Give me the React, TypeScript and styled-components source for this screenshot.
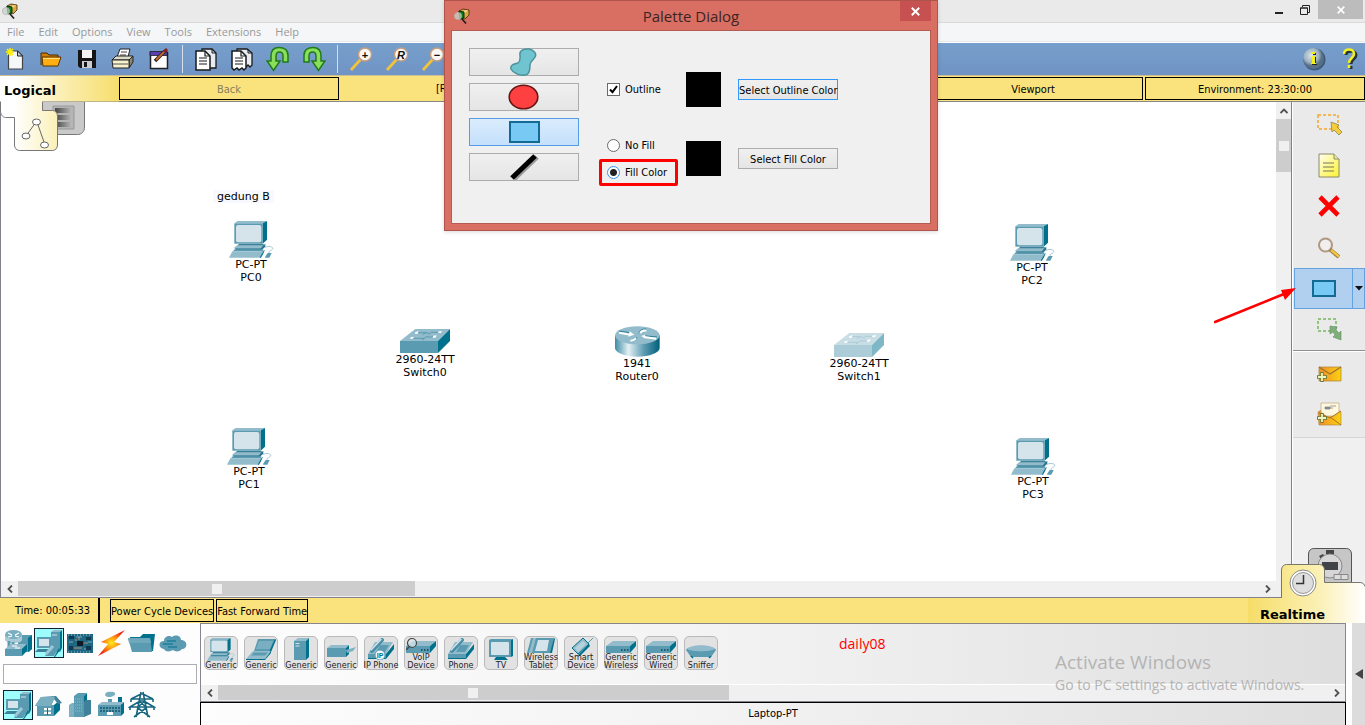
import React from "react";
import styled, { createGlobalStyle, css } from "styled-components";

const ui = `"DejaVu Sans Condensed", "DejaVu Sans", sans-serif`;
const segoe = `"Open Sans", "Noto Sans", sans-serif`;
const verdana = `"DejaVu Sans", sans-serif`;

const GlobalStyle = createGlobalStyle`
  *, *::before, *::after { box-sizing: border-box; }
  body { margin: 0; font: 11px/13px ${ui}; color: #000; background: #f0f0f0; }
  button { font: inherit; color: inherit; padding: 0; margin: 0; border: 0; background: none; }
  svg { display: block; flex: none; }
`;

/* ---------- frame ---------- */

const Page = styled.div`
  position: relative;
  display: flex;
  flex-direction: column;
  min-height: 100vh;
  overflow: hidden;
`;

const TitleBar = styled.header`
  display: flex;
  justify-content: space-between;
  height: 23px;
  background: #eaeaea;
  border-bottom: 1px solid #d9dadc;
`;

const AppIconBox = styled.div`
  padding: 3px 2px;
`;

const WindowButtons = styled.div`
  display: flex;
  padding-right: 2px;
`;

const WindowButton = styled.button<{ $close?: boolean }>`
  display: flex;
  align-items: center;
  justify-content: center;
  width: ${(p) => (p.$close ? 45 : 26)}px;
  height: 19px;
  background: ${(p) => (p.$close ? "#bcbcbc" : "transparent")};
`;

const MenuBar = styled.nav`
  display: flex;
  align-items: center;
  gap: 14px;
  height: 19px;
  padding-left: 7px;
  background: #f5f6f7;
  border-bottom: 1px solid #e8e9ea;
  font: 11px/16px ${segoe};
  color: #98999b;
`;

const ToolBar = styled.div`
  display: flex;
  align-items: center;
  justify-content: space-between;
  height: 34px;
  background: linear-gradient(#769fcb, #7094c5);
  border-top: 1px solid #fff;
  border-bottom: 1px solid #cdbf95;
`;

const ToolGroup = styled.div`
  display: flex;
  align-items: center;
  gap: 6px;
`;

const ToolButton = styled.button`
  display: flex;
  align-items: center;
  justify-content: center;
  width: 30px;
  height: 30px;
`;

const ToolSeparator = styled.span`
  width: 1px;
  height: 28px;
  margin: 0 2px;
  background: #d5dfec;
`;

const NavBar = styled.div`
  position: relative;
  display: flex;
  gap: 2px;
  height: 26px;
  padding: 1px 0 1px 119px;
  background: #fae37d;
  border-bottom: 1px solid #86868a;
`;

const NavButton = styled.button`
  width: 220px;
  height: 23px;
  padding-top: 1px;
  border: 1px solid #000;
  &:disabled { color: #85805f; }
`;

const NavLabel = styled.div`
  width: 220px;
  line-height: 24px;
  text-align: center;
`;

const Spacer = styled.div`
  flex: 1;
`;

const LogicalTab = styled.div`
  position: absolute;
  left: 0;
  top: 0;
  z-index: 2;
`;

const TabName = styled.span<{ $left: number; $top: number }>`
  position: absolute;
  left: ${(p) => p.$left}px;
  top: ${(p) => p.$top}px;
  font: bold 13px/16px ${verdana};
`;

/* ---------- work area ---------- */

const Main = styled.main`
  display: flex;
  flex: 1;
`;

const Workspace = styled.section`
  display: flex;
  flex-direction: column;
  flex: 1;
  min-width: 0;
  background: #f0f0f0;
  border: solid #80818c;
  border-width: 0 1px 1px;
`;

const CanvasRow = styled.div`
  display: flex;
  flex: 1;
`;

const ScrollFoot = styled.div`
  padding-right: 15px;
`;

const Canvas = styled.div`
  position: relative;
  flex: 1;
  background: #fff;
`;

const Node = styled.figure<{ $x: number; $y: number }>`
  position: absolute;
  left: ${(p) => p.$x}px;
  top: ${(p) => p.$y}px;
  display: flex;
  flex-direction: column;
  align-items: center;
  width: 80px;
  margin: 0;
  font: 11px/13px ${verdana};
  text-align: center;
`;

const CanvasNote = styled.div`
  position: absolute;
  left: 212px;
  top: 88px;
  padding: 0 4px;
  background: #f8f8ff;
  font: 11px/13px ${verdana};
`;

const ScrollTrack = styled.div<{ $vertical?: boolean }>`
  display: flex;
  background: #f0f0f0;
  ${(p) =>
    p.$vertical
      ? css`flex-direction: column; width: 15px;`
      : css`height: 17px; padding-bottom: 1px; border-top: 1px solid #fff;`}
`;

const ScrollArrow = styled.button<{ $vertical?: boolean }>`
  display: flex;
  align-items: center;
  justify-content: center;
  flex: none;
  width: ${(p) => (p.$vertical ? 15 : 17)}px;
  height: ${(p) => (p.$vertical ? 17 : 15)}px;
`;

const ScrollRail = styled.div<{ $vertical?: boolean }>`
  display: flex;
  flex: 1;
  flex-direction: ${(p) => (p.$vertical ? "column" : "row")};
`;

const ScrollThumb = styled.div<{ $size: string }>`
  display: flex;
  align-items: center;
  justify-content: center;
  flex: 0 0 ${(p) => p.$size};
  background: #cdcdcd;
  &::after {
    content: "";
    width: 10px;
    height: 10px;
    background: #f0f0f0;
  }
`;

const SideBar = styled.aside`
  width: 73px;
  background: #f0f0f0;
  border-left: 1px solid #fff;
`;

const SideTools = styled.div`
  display: flex;
  flex-direction: column;
  padding: 2px 0;
  background: #eaeaea;
  border-bottom: 1px solid #d5d5d8;
`;

const SideButton = styled.button<{ $active?: boolean }>`
  display: flex;
  align-items: center;
  justify-content: center;
  height: 41px;
  ${(p) =>
    p.$active &&
    css`
      flex: 1;
      background: #b1d0f0;
      border: 1px solid #64a2e0;
    `}
`;

const SideSplit = styled.div`
  display: flex;
  padding-left: 1px;
`;

const SideDrop = styled.button`
  display: flex;
  align-items: center;
  justify-content: center;
  width: 12px;
  background: #b1d0f0;
  border: solid #64a2e0;
  border-width: 1px 1px 1px 0;
`;

const SideRule = styled.hr`
  width: 100%;
  margin: 0 0 1px;
  border: solid #8f8f8f;
  border-width: 1px 0 0;
  border-bottom: 1px solid #fff;
`;

const ArrowMark = styled.div`
  position: absolute;
  right: 69px;
  top: 284px;
  z-index: 3;
`;

/* ---------- status ---------- */

const StatusBar = styled.div`
  position: relative;
  display: flex;
  gap: 2px;
  height: 25px;
  background: #fae37d;
`;

const Clock = styled.div`
  width: 100px;
  margin-right: 8px;
  padding-left: 15px;
  line-height: 26px;
  border-right: 2px solid #000;
`;

const StatusButton = styled.button`
  height: 23px;
  margin-top: 1px;
  padding-top: 1px;
  border: 1px solid #000;
`;

const RealtimeTab = styled.div`
  position: absolute;
  right: 0;
  bottom: 0;
  width: 117px;
  height: 75px;
  z-index: 2;
`;

/* ---------- device picker ---------- */

const Picker = styled.footer`
  position: relative;
  display: flex;
  background: #fff;
`;

const Categories = styled.div`
  display: flex;
  flex-direction: column;
  gap: 6px;
  width: 200px;
  padding: 5px 3px;
  background: #fdfdfd;
`;

const CategoryRow = styled.div`
  display: flex;
  gap: 1px;
`;

const CategoryButton = styled.button<{ $active?: boolean }>`
  display: flex;
  align-items: center;
  justify-content: center;
  width: 30px;
  height: 30px;
  ${(p) =>
    p.$active &&
    css`
      background: #9dfcfc;
      border: 1px solid #123;
    `}
`;

const DeviceSearch = styled.input`
  width: 100%;
  height: 20px;
  padding: 0 4px;
  border: 1px solid #abadb3;
  background: #fff;
  font: 11px/13px ${ui};
`;

const DevicePane = styled.div`
  display: flex;
  flex-direction: column;
  flex: 1;
  min-width: 0;
  background: linear-gradient(90deg, #fdfdfd, #f3f3f3 45%, #dedede);
  border: solid #86868c;
  border-width: 1px 1px 0;
`;

const DeviceList = styled.div`
  display: flex;
  gap: 6px;
  height: 60px;
  padding: 12px 3px 0;
`;

const DeviceTile = styled.button`
  display: flex;
  flex-direction: column;
  align-items: center;
  justify-content: space-between;
  width: 34px;
  height: 34px;
  background: #e2e2e2;
  border: 1px solid #bababa;
  border-radius: 5px;
  font: 9px/8px ${ui};
  color: #222;
  text-align: center;
  white-space: nowrap;
`;

const CaptionSlot = styled.span<{ $tall: boolean }>`
  height: ${(p) => (p.$tall ? 16 : 24)}px;
  padding-top: ${(p) => (p.$tall ? 0 : 1)}px;
`;

const DeviceCaption = styled.span`
  display: flex;
  flex-direction: column;
`;

const SelectedDevice = styled.output`
  display: block;
  flex: 1;
  margin: 1px -1px 0;
  border: solid #000;
  border-width: 1px 1px 0;
  box-shadow: 0 -1px #86868c;
  line-height: 22px;
  text-align: center;
`;

const DrawerHandle = styled.button`
  display: flex;
  align-items: center;
  justify-content: flex-end;
  width: 13px;
  margin-left: 6px;
  padding-right: 2px;
  background: #dcdcdc;
`;

const AuthorMark = styled.div`
  position: absolute;
  left: 839px;
  top: 12px;
  font: 14px/18px ${segoe};
  color: #f00;
`;

const Watermark = styled.div`
  position: absolute;
  right: 55px;
  top: 26px;
  width: 255px;
  font-family: ${segoe};
  white-space: nowrap;
  color: #b4b4b4;
`;

const WatermarkTitle = styled.div`
  font-size: 19px;
  line-height: 26px;
`;

const WatermarkText = styled.div`
  font-size: 14px;
  line-height: 20px;
`;

/* ---------- dialog ---------- */

const Dialog = styled.div`
  position: absolute;
  left: 444px;
  top: 0;
  z-index: 5;
  width: 494px;
  padding: 0 6px 6px;
  background: #d86f62;
  border: 1px solid #ad554b;
  box-shadow: 0 1px 4px rgba(0, 0, 0, 0.15);
`;

const DialogHeader = styled.div`
  display: flex;
  align-items: center;
  height: 29px;
  padding-left: 3px;
`;

const DialogTitle = styled.h1`
  flex: 1;
  margin: 0;
  padding-left: 12px;
  font: 15px/28px ${segoe};
  color: #3c2422;
  text-align: center;
`;

const DialogClose = styled.button`
  display: flex;
  align-items: center;
  justify-content: center;
  align-self: flex-start;
  width: 31px;
  height: 20px;
  background: #c75050;
`;

const DialogBody = styled.div`
  display: flex;
  height: 194px;
  padding: 17px;
  background: #f0f0f0;
  border: 1px solid #b45c51;
`;

const ShapeList = styled.div`
  display: flex;
  flex-direction: column;
  gap: 7px;
  width: 110px;
`;

const ShapeButton = styled.button<{ $active?: boolean }>`
  display: flex;
  align-items: center;
  justify-content: center;
  height: 28px;
  border: 1px solid ${(p) => (p.$active ? "#569de5" : "#acacac")};
  background: ${(p) =>
    p.$active ? "linear-gradient(#daecfc, #c4e0fc)" : "linear-gradient(#f0f0f0, #e5e5e5)"};
`;

const Options = styled.div`
  padding: 7px 0 0 28px;
`;

const OptionRow = styled.div`
  display: grid;
  grid-template-columns: 79px 52px 100px;
  align-items: center;
  height: 69px;
`;

const Choice = styled.label<{ $marked?: boolean }>`
  position: relative;
  display: flex;
  align-items: center;
  gap: 5px;
  width: 63px;
  height: 27px;
  white-space: nowrap;
  ${(p) =>
    p.$marked &&
    css`
      &::after {
        content: "";
        position: absolute;
        inset: 0 -8px;
        border: 3px solid #f00;
        border-radius: 2px;
      }
    `}
`;

const Mark = styled.input`
  appearance: none;
  flex: none;
  width: 13px;
  height: 13px;
  margin: 0;
  background: #fff;
  border: 1px solid #6b6b6b;
  &[type="radio"] { border-radius: 50%; }
  &[type="radio"]:checked {
    border-color: #3a94f0;
    background: radial-gradient(circle, #222 0 3px, #fff 4px);
  }
  &[type="checkbox"]:checked {
    background: #fff url("data:image/svg+xml,%3Csvg xmlns='http://www.w3.org/2000/svg' viewBox='0 0 11 11'%3E%3Cpath d='M2 5.5 4.5 8.2 9 2' fill='none' stroke='%23000' stroke-width='2'/%3E%3C/svg%3E");
  }
`;

const Swatch = styled.div`
  width: 35px;
  height: 35px;
  background: #000;
`;

const ColorButton = styled.button<{ $focused?: boolean }>`
  height: 21px;
  padding-top: 1px;
  border: 1px solid ${(p) => (p.$focused ? "#3399ff" : "#acacac")};
  background: linear-gradient(#f0f0f0, #e5e5e5);
  white-space: nowrap;
`;

/* ---------- drawings ---------- */

const T = "#5b9bb2";
const L = "#92bccb";
const D = "#00718c";
const S = "#d4e4ea";

const AppIcon = () => (
  <svg width="16" height="16" viewBox="0 0 16 16">
    <path d="M5 3l4-2 6 1v5l-4 4-5-2z" fill="#e0a83c" stroke="#3a2b10" strokeWidth=".8" />
    <path d="M9 3l5-1-4 4z" fill="#f8da90" />
    <path d="M5 3l5 1v6l-4 1z" fill="#0c7a1c" stroke="#06320c" />
    <circle cx="4" cy="8" r="3.6" fill="#c9d2c8" fillOpacity=".75" stroke="#aeb4ae" strokeWidth=".7" />
    <path d="M8 11l4 4.500" stroke="#1c1c1c" strokeWidth="1.600" />
  </svg>
);

const NewIcon = () => (
  <svg width="20" height="24" viewBox="0 0 20 24">
    <path d="M3.500 4h9l5 5v13h-14z" fill="#f6f7f8" stroke="#444" strokeWidth="1.200" />
    <path d="M12.500 4v5h5z" fill="#ccd4dc" stroke="#222" />
    <path d="M5 1v8M1 5h8M2 2l6 6M8 2L2 8" stroke="#fff000" strokeWidth="1.500" />
  </svg>
);
const OpenIcon = () => (
  <svg width="24" height="20" viewBox="0 0 24 20">
    <path d="M2 16V4h6l2 2h9v4" fill="#d07a08" stroke="#4a2c00" />
    <path d="M4 17L3 8h19l-3 9z" fill="#ffae14" stroke="#5a3500" />
    <path d="M4 9.500h17" stroke="#ffe08a" />
  </svg>
);
const SaveIcon = () => (
  <svg width="20" height="20" viewBox="0 0 20 20">
    <path d="M1 1h18v18H3l-2-2z" fill="#151515" />
    <path d="M5 1h10v8H5z" fill="#f4f4f4" />
    <path d="M5 12h10v7H5z" fill="#c9ccd0" />
    <path d="M7 13h3v5H7z" fill="#151515" />
  </svg>
);
const PrintIcon = () => (
  <svg width="24" height="22" viewBox="0 0 24 22">
    <path d="M6 9l3-8h10l-2 8z" fill="#fff" stroke="#222" />
    <path d="M10 4h6M9 7h6" stroke="#444" />
    <path d="M1 12l4-4h17l-4 4z" fill="#dcdcc8" stroke="#222" />
    <path d="M18 12l4-4v6l-4 6z" fill="#8a8a72" stroke="#222" />
    <path d="M1 12h17v8H2z" fill="#f6f3cc" stroke="#222" />
    <path d="M2 16h15" stroke="#555" />
  </svg>
);
const WizardIcon = () => (
  <svg width="20" height="22" viewBox="0 0 20 22">
    <path d="M1.500 4.500h17v16h-17z" fill="#fff" stroke="#222" strokeWidth="1.500" />
    <path d="M1 3.500h17v4H1z" fill="#5b3fb4" stroke="#222" strokeWidth=".8" />
    <path d="M6 13L16 3" stroke="#222" strokeWidth="3.500" />
    <path d="M7 12l9-9" stroke="#c7642c" strokeWidth="2" />
    <path d="M15 4l3-3" stroke="#8b1f1f" strokeWidth="3" />
  </svg>
);
const CopyIcon = ({ torn }: { torn?: boolean }) => (
  <svg width="24" height="25" viewBox="0 0 24 25">
    <path
      d={torn ? "M7 2h10l5 4v12l-2 2-2-2-2 2-9-1z" : "M8 2h10l4 4v15H8z"}
      fill="#e8ecf2"
      stroke="#1a1a1a"
      strokeWidth="1.300"
    />
    <path d="M18 2v4h4" fill="none" stroke="#1a1a1a" />
    <path
      d={torn ? "M2 4h9l5 5v12l-2 2-2-2-3 2-2-2-3 2-2-2z" : "M2 4h9l5 5v14H2z"}
      fill="#fff"
      stroke="#1a1a1a"
      strokeWidth="1.500"
    />
    <path d="M11 4v5h5M5 11h8M5 14h8M5 17h8" fill="none" stroke="#1a1a1a" strokeWidth="1.200" />
  </svg>
);
const UndoIcon = ({ flip }: { flip?: boolean }) => (
  <svg width="24" height="26" viewBox="0 0 24 26">
    <path
      transform={flip ? "translate(24 0) scale(-1 1)" : undefined}
      d="M1 15h4V10C5 4 8 1.500 13 1.500S22 4 22 9.500V16h-5v-6c0-3-1.500-4-3.500-4S10 7 10 10v5h4l-6.500 9.500z"
      fill="#8ade5a"
      stroke="#1f7a1c"
      strokeWidth="1.500"
    />
  </svg>
);
const ZoomIcon = ({ sign }: { sign: string }) => (
  <svg width="24" height="26" viewBox="0 0 24 26">
    <path d="M2 24L12 13" stroke="#f2c23c" strokeWidth="2.800" />
    <circle cx="16" cy="8.500" r="6.500" fill="#fbf8f4" stroke="#c49e84" strokeWidth="1.500" />
    <text
      x="16"
      y="12.500"
      textAnchor="middle"
      fontFamily="Liberation Sans"
      fontWeight="bold"
      fontStyle={sign === "R" ? "italic" : "normal"}
      fontSize="11"
      fill="#111"
    >
      {sign}
    </text>
  </svg>
);
const InfoIcon = () => (
  <svg width="24" height="24" viewBox="0 0 24 24">
    <defs>
      <radialGradient id="ball" cx=".4" cy=".35">
        <stop offset="0" stopColor="#dce4e8" />
        <stop offset=".7" stopColor="#9db2c0" />
        <stop offset="1" stopColor="#577088" />
      </radialGradient>
    </defs>
    <circle cx="12.500" cy="12.500" r="11" fill="#3d5a78" />
    <circle cx="11.500" cy="11.500" r="10.500" fill="url(#ball)" />
    <path d="M11 6h3v2h-3zM10 10h4v7h1v1h-5v-1h1v-6h-1z" fill="#222" />
    <path d="M10 5h3v2h-3zM9 9h4v7h1v1H9v-1h1v-6H9z" fill="#f4f01c" />
  </svg>
);
const HelpIcon = () => (
  <svg width="18" height="24" viewBox="0 0 18 24">
    <g fill="none" strokeWidth="3">
      <path d="M5 8c0-5 10-5 10 0 0 4-5 4-5 9M10 19v3" stroke="#26343e" />
      <path d="M3 7c0-6 10-6 10 0 0 4-5 4-5 9M8 18v3" stroke="#f2f020" strokeWidth="2.600" />
    </g>
  </svg>
);

const Chevron = ({ dir }: { dir: "left" | "right" | "up" }) => (
  <svg width="8" height="8" viewBox="0 0 8 8">
    <path
      d={{ left: "M6 .5L2.500 4 6 7.500", right: "M2 .5L5.500 4 2 7.500", up: "M.5 6L4 2.500 7.500 6" }[dir]}
      fill="none"
      stroke="#505050"
      strokeWidth="1.800"
    />
  </svg>
);

const Cross = ({ size, color }: { size: number; color: string }) => (
  <svg width={size} height={size} viewBox="0 0 8 8">
    <path d="M.7.7l6.600 6.600M7.300.7L.7 7.300" stroke={color} strokeWidth="1.700" />
  </svg>
);

const PcIcon = ({ width = 45, height = 37 }) => (
  <svg width={width} height={height} viewBox="0 0 135 111">
    <path d="M16 7L26 0h88L101 7z" fill={L} />
    <path d="M101 7l13-7v56l-13 12z" fill={D} />
    <path d="M16 7h85v61H16z" fill={T} />
    <rect x="21" y="12" width="76" height="52" rx="6" fill={S} />
    <path d="M30 68h71l6 4-8 6H22z" fill="#3f8199" />
    <path d="M24 73h80l-9 9H14z" fill={L} />
    <path d="M104 72l5-3v8l-12 11H22l-5-6h78z" fill="#2a7890" />
    <path d="M17 85h86v6H12z" fill={T} />
    <path d="M10 91h93l-9 19H0z" fill={L} />
    <path d="M103 91l5-5-6 14-6 10h-4z" fill={D} />
    <path d="M108 79c14-6 28 0 22 6-3 4-12 4-9 12" fill="none" stroke={L} strokeWidth="2.500" />
    <path d="M108 108l8-12h12l-7 14h-12z" fill={T} />
  </svg>
);

const SwitchIcon = ({ faded }: { faded?: boolean }) => (
  <svg width="50" height="24" viewBox="0 0 150 72" opacity={faded ? 0.5 : 1}>
    <path d="M0 36L46 0h104l-36 36z" fill={L} />
    <path d="M0 36h114v36H0z" fill={T} />
    <path d="M114 36l36-36v36l-36 36z" fill={D} />
    <g fill="none" stroke={T} strokeWidth="3">
      <path d="M52 11h26l-10 6M92 10h28M36 28h38l-8 5M82 24h26M78 11l14 4M74 26l10-5" />
    </g>
    <g fill="#fff">
      <path d="M46 9l10-2-3 7-8 1zM116 7h10l-3 5h-9zM32 25l10-2-3 6h-9zM100 20l10-1-3 7h-9z" />
    </g>
  </svg>
);

const RouterIcon = ({ width = 45, height = 31 }) => (
  <svg width={width} height={height} viewBox="0 0 135 93">
    <defs>
      <linearGradient id="drum">
        <stop offset="0" stopColor="#3d8ba3" />
        <stop offset=".3" stopColor="#e4f0f4" />
        <stop offset=".65" stopColor="#5b9bb2" />
        <stop offset="1" stopColor="#00607a" />
      </linearGradient>
    </defs>
    <path d="M0 28v38c0 14 30 26 67 26s67-12 67-26V28z" fill="url(#drum)" />
    <ellipse cx="67" cy="28" rx="67" ry="27" fill={L} />
    <g fill="none" stroke="#2c7f99" strokeWidth="3">
      <path d="M12 15l32 5M72 22c2-10 10-14 22-13M84 29l42 4M66 34c-2 8-10 12-18 12" />
    </g>
    <g fill="none" stroke="#fff" strokeWidth="6">
      <path d="M12 20l34 6M76 22c2-8 8-9 18-8M86 33l38 5M62 36c-2 6-8 8-16 8" />
    </g>
    <path d="M44 16l14 10-18 6zM90 26l-12 4 14 7z" fill="#fff" />
  </svg>
);

/* devices on the tiles share a 30 x 22 drawing area */
const Tile = ({ children }: { children: React.ReactNode }) => (
  <svg width="30" height="22" viewBox="0 0 30 22">{children}</svg>
);

const LaptopArt = () => (
  <Tile>
    <path d="M12 1h18l-5 12H8z" fill={T} />
    <path d="M13 3h14l-3 8H10z" fill="#79afc1" />
    <path d="M29 1l1 1-5 12h-2z" fill={D} />
    <path d="M7 13h18l-6 8H0z" fill={L} />
    <path d="M8 14.500h14l-3 3H5z" fill={T} />
    <path d="M25 13v2l-6 7H0v-1h19z" fill={D} />
  </Tile>
);
const ServerArt = () => (
  <Tile>
    <path d="M8 3l4-3h11l-3 3z" fill={L} />
    <path d="M8 3h12v19H8z" fill={T} />
    <path d="M20 3l3-3v19l-3 3z" fill={D} />
    <path d="M9.500 5.500h4M9.500 8h4" stroke={S} />
  </Tile>
);
const PrinterArt = () => (
  <Tile>
    <path d="M1 10l4-3h18l-3 3z" fill={L} />
    <path d="M1 10h19v9H1z" fill={T} />
    <path d="M20 10l3-3v9l-3 3z" fill={D} />
    <path d="M20 12l10-3-3 4-6 2z" fill="#7fb0c2" />
  </Tile>
);
const PhoneArt = ({ ip }: { ip?: boolean }) => (
  <Tile>
    <path d="M9 4h18l-7 12H2z" fill={L} />
    <path d="M2 16h18l8-10v5l-8 10H2z" fill={D} />
    <path d="M2 16h18v4H2z" fill={T} />
    <path d="M14 7h9l-4 7h-9z" fill={T} />
    <path d="M6 13L16 2" stroke="#4a8fa8" strokeWidth="4" strokeLinecap="round" />
    <path d="M5 12L15 1.500" stroke={S} strokeWidth="1.500" strokeLinecap="round" />
    {ip && (
      <>
        <circle cx="14" cy="17" r="5" fill="#f4f8fa" stroke={T} />
        <text x="14" y="20" textAnchor="middle" fontFamily="Liberation Sans" fontWeight="bold" fontSize="7" fill={D}>IP</text>
      </>
    )}
  </Tile>
);
const BoxArt = ({ lens, dots }: { lens?: boolean; dots?: boolean }) => (
  <Tile>
    <path d="M0 9l7-5h23l-6 5z" fill={L} />
    <path d="M0 9h24v7H0z" fill={T} />
    <path d="M24 9l6-5v5l-6 7z" fill={D} />
    {dots && <path d="M15 13h1.500M18 13h1.500M21 13h1.500" stroke="#08445a" strokeWidth="1.500" />}
    {lens && (
      <>
        <circle cx="6" cy="6" r="4.500" fill="#dde9ee" fillOpacity=".6" stroke="#444" strokeWidth="1.200" />
        <path d="M3 10l-3 3" stroke="#444" strokeWidth="1.500" />
      </>
    )}
  </Tile>
);
const TvArt = () => (
  <Tile>
    <path d="M3 2l2-1h22l-2 1v17H3z" fill={T} />
    <path d="M27 1v17l-2 1V2z" fill={D} />
    <rect x="5" y="4" width="18" height="13" rx="1" fill={S} />
    <path d="M10 19h9l3 3H8z" fill={D} />
  </Tile>
);
const TabletArt = () => (
  <Tile>
    <path d="M5 1h23l-3 15H1z" fill={T} />
    <path d="M7 1h3L6 16H3z" fill={L} />
    <path d="M12 3h11l-2 11H9z" fill={S} />
    <path d="M28 1l1 1-3 14h-2z" fill={D} />
  </Tile>
);
const SmartArt = () => (
  <Tile>
    <path d="M6 11L17 1l6 6-11 10z" fill={L} stroke={D} />
    <path d="M9 11l8-7 3 3-8 8z" fill="#b6d3dd" />
    <path d="M12 18L23 7l1 2-10 10z" fill={D} />
    <path d="M22 6l5-5" stroke={T} />
  </Tile>
);
const SnifferArt = () => (
  <Tile>
    <path d="M0 12c2-5 28-5 30 0l-5 7H5z" fill={T} />
    <path d="M1 11c4-5 24-5 28 0-4 3-24 3-28 0z" fill={L} />
    <path d="M5 18l2 2M25 18l-2 2" stroke={D} strokeWidth="1.500" />
  </Tile>
);

/* categories, 28 x 28 */
const Cat = ({ children }: { children: React.ReactNode }) => (
  <svg width="28" height="28" viewBox="0 0 28 28">{children}</svg>
);
const NetworkArt = () => (
  <Cat>
    <path d="M14 9l4-3h10v14l-3 3H14z" fill={T} />
    <path d="M24 9l4-3v14l-4 3z" fill={D} />
    <path d="M1 6v5c2 4 16 4 17 0V6z" fill="#a9cad6" />
    <ellipse cx="9.500" cy="5.500" rx="8.500" ry="4.500" fill="#79afc1" />
    <path d="M4 4l4 2M15 4l-4 2M4 8l4-1M15 8l-4-1" stroke="#fff" strokeWidth="1.200" />
    <path d="M5 12v6M9 13v4" stroke={T} strokeWidth="3" />
    <path d="M1 20l6-5h16l-5 5z" fill={L} />
    <path d="M1 20h17v7H1z" fill={T} />
    <path d="M18 20l5-5v7l-5 5z" fill={D} />
    <path d="M8 17h5M11 19h5" stroke="#fff" />
  </Cat>
);
const EndDevicesArt = () => (
  <Cat>
    <path d="M16 3l3-2h8l-2 2z" fill={L} />
    <path d="M16 3h9v20h-9z" fill={T} />
    <path d="M25 3l2-2v18l-2 4z" fill={D} />
    <path d="M17 6h5" stroke={S} />
    <path d="M2 8h14v11H2z" fill={T} />
    <path d="M4 10h10v7H4z" fill={S} />
    <path d="M3 20h12l-2 3H0z" fill="#3f8199" />
    <path d="M15 19h9l-5 8h-9z" fill={T} />
    <path d="M11 25l7-8" stroke="#9cc7d5" strokeWidth="3" />
    <path d="M24 19l1 2-5 7h-1z" fill={D} />
  </Cat>
);
const BoardArt = () => (
  <Cat>
    <path d="M1 5h26v19H1z" fill="#1f6782" />
    <path d="M11 12h6v5h-6z" fill="#0d1c26" />
    <g fill="#0d3a50">
      <path d="M3 7h5v3H3zM20 8h5v3h-5zM3 17h4v4H3zM20 17h5v4h-5z" />
    </g>
    <path d="M2 6h24M2 23h24" stroke="#9fc3d0" strokeDasharray="1 2" />
    <path d="M9 11h2M18 14h4M8 19h8M13 8v3" stroke="#e0a070" strokeWidth=".8" />
    <path d="M3 13h4M10 8h6M18 20h2M22 13h4" stroke="#8fb9c9" strokeWidth=".8" />
  </Cat>
);
const BoltArt = () => (
  <Cat>
    <defs>
      <radialGradient id="spark">
        <stop offset="0" stopColor="#ffee20" />
        <stop offset=".5" stopColor="#ff9010" />
        <stop offset="1" stopColor="#f02410" />
      </radialGradient>
    </defs>
    <path d="M28 1L4 13l7 2-10 12 23-12-7-2z" fill="url(#spark)" />
  </Cat>
);
const FolderArt = () => (
  <Cat>
    <path d="M2 8h10l3-3h12l-2 17H4z" fill={D} />
    <path d="M0 9h22l2 14H4z" fill={T} />
    <path d="M0 9h22l1 5H1z" fill="#6fa8bb" />
  </Cat>
);
const CloudArt = () => (
  <Cat>
    <path d="M5 20c-6-1-6-8 0-8 0-5 6-6 8-4 4-3 9-1 9 3 7 0 7 9 1 9-2 3-7 3-9 1-3 2-8 2-9-1z" fill={T} />
    <path d="M8 12h9M4 15h10M9 18h9" stroke={D} strokeWidth="1.200" />
  </Cat>
);
const HouseArt = () => (
  <Cat>
    <path d="M2 14h17v11H2z" fill={T} />
    <path d="M19 14l6-5v10l-6 6z" fill={D} />
    <path d="M0 15L6 6l15-1 6 7-4 1-4-5-3 7z" fill="#3f8199" />
    <path d="M0 15L6 6h14l-4 9z" fill="#79afc1" />
    <path d="M9 17h7v6H9z" fill="#fff" />
    <path d="M12.500 17v7M9 20h7" stroke={D} />
  </Cat>
);
const CityArt = () => (
  <Cat>
    <path d="M8 5l4-3h9l-3 3v21H8z" fill={T} />
    <path d="M18 5l3-3v21l-3 3z" fill={D} />
    <path d="M3 14l3-2h2v14H3z" fill="#79afc1" />
    <path d="M18 11l2-2h5v14l-7 3z" fill="#3f8199" />
    <path d="M9 8h8M9 11h8M9 14h8M9 17h8M9 20h8M4 16h3M4 19h3M4 22h3" stroke={L} strokeDasharray="1 1" />
  </Cat>
);
const FactoryArt = () => (
  <Cat>
    <path d="M8 4c0-3 4-4 6-3 4-1 6 3 2 4-2 2-8 1-8-1z" fill="#79afc1" />
    <path d="M21 6h4v10h-4z" fill={D} />
    <path d="M11 8h4v4h-4z" fill={T} />
    <path d="M1 14l4-3h22l-3 3z" fill={L} />
    <path d="M1 14h23v11H1z" fill={T} />
    <path d="M24 14l3-3v11l-3 3z" fill={D} />
    <path d="M3 17h20M3 20h20" stroke="#12586c" strokeWidth="1.500" strokeDasharray="2 1" />
    <path d="M10 21h6v3h-6z" fill="#fff" />
  </Cat>
);
const PylonArt = () => (
  <Cat>
    <g fill="none" stroke="#17657f" strokeWidth="1.600">
      <path d="M13 1L8 26M15 1l5 25M3 8l10-5h2l10 5zM2 16l10-6h4l10 6zM6 26l12-9M22 26L10 17M11 10l7 6M17 10l-7 6M3 8v3M25 8v3M2 16v3M26 16v3" />
    </g>
  </Cat>
);

const SelectIcon = () => (
  <svg width="26" height="22" viewBox="0 0 26 22">
    <path d="M2 1h20v14H2z" fill="none" stroke="#f5a52c" strokeWidth="1.500" strokeDasharray="3 2" />
    <path d="M15 8l8 3-2 2 5 5-3 3-5-5-2 2z" fill="#f3cd3a" stroke="#8f8455" strokeWidth=".8" />
  </svg>
);
const NoteIcon = () => (
  <svg width="22" height="25" viewBox="0 0 22 25">
    <defs>
      <linearGradient id="paper" x1="0" y1="0" x2="1" y2="1">
        <stop offset="0" stopColor="#fffef0" />
        <stop offset="1" stopColor="#fdf32c" />
      </linearGradient>
    </defs>
    <path d="M1 1h15l5 5v18H1z" fill="url(#paper)" stroke="#8a8a6c" />
    <path d="M16 1v5h5" fill="#eee9a0" stroke="#8a8a6c" />
    <path d="M5 10h11M5 14h11M5 18h11" stroke="#77775c" />
  </svg>
);
const DeleteIcon = () => (
  <svg width="24" height="24" viewBox="0 0 24 24">
    <path d="M3 2l18 18M21 2L3 20" stroke="#f00" strokeWidth="4.600" />
  </svg>
);
const InspectIcon = () => (
  <svg width="24" height="22" viewBox="0 0 24 22">
    <circle cx="8.500" cy="8" r="6.500" fill="#f0efee" stroke="#b09880" strokeWidth="2" />
    <path d="M13 12.500l9 7.500" stroke="#94794a" strokeWidth="4" />
    <path d="M14 13l8 6.600" stroke="#f4c83a" strokeWidth="2.400" />
  </svg>
);
const RectIcon = ({ width = 24, height = 17 }) => (
  <svg width={width} height={height}>
    <rect x="1" y="1" width={width - 2} height={height - 2} fill="#78caf4" stroke="#136a94" strokeWidth="2" />
  </svg>
);
const ResizeIcon = () => (
  <svg width="26" height="24" viewBox="0 0 26 24">
    <path d="M2 1h18v12H2z" fill="none" stroke="#76b85c" strokeWidth="1.500" strokeDasharray="3 2" />
    <path d="M14 8l7 1-1 3 3 3 2-2v9l-8-3 2-2-2-3-3 2z" fill="#7fae7c" stroke="#648f66" strokeWidth=".6" />
  </svg>
);
const MailIcon = ({ open }: { open?: boolean }) => (
  <svg width="26" height="25" viewBox="0 0 26 25">
    <defs>
      <linearGradient id="mail">
        <stop offset="0" stopColor="#f08c2c" />
        <stop offset="1" stopColor="#fcd210" />
      </linearGradient>
    </defs>
    {open ? (
      <>
        <path d="M2 10l11-7 12 7v13H3z" fill="url(#mail)" stroke="#a8803c" strokeWidth=".6" />
        <path d="M5 1h18v9l-5 4h-8l-5-4z" fill="#fff8e0" stroke="#c0a880" strokeWidth=".7" />
        <path d="M9 5h5v2H9zM14 4h6M14 6h3" fill="#888" stroke="#888" strokeWidth=".8" />
        <path d="M14 15l11 8M3 11l11 5 11-7" fill="none" stroke="#a8742c" />
      </>
    ) : (
      <>
        <path d="M3 6h22v14H3z" fill="url(#mail)" stroke="#a8803c" strokeWidth=".7" />
        <path d="M3 6l11 7L25 6" fill="none" stroke="#9a742c" strokeWidth="1.200" />
      </>
    )}
    <path d="M6 11v10M1 16h10" stroke="#6d7a38" strokeWidth="3.400" />
    <path d="M6 12v8M2 16h8" stroke="#eef4c0" strokeWidth="1.800" />
  </svg>
);

/* ---------- data ---------- */

const menus = ["File", "Edit", "Options", "View", "Tools", "Extensions", "Help"];

const nodes = [
  { x: 210, y: 119, art: <PcIcon />, model: "PC-PT", name: "PC0" },
  { x: 991, y: 122, art: <PcIcon />, model: "PC-PT", name: "PC2" },
  { x: 208, y: 326, art: <PcIcon />, model: "PC-PT", name: "PC1" },
  { x: 992, y: 336, art: <PcIcon />, model: "PC-PT", name: "PC3" },
  { x: 384, y: 227, art: <SwitchIcon />, model: "2960-24TT", name: "Switch0" },
  { x: 596, y: 224, art: <RouterIcon />, model: "1941", name: "Router0" },
  { x: 818, y: 231, art: <SwitchIcon faded />, model: "2960-24TT", name: "Switch1" },
];

const devices = [
  { lines: ["Generic"], art: <PcIcon width={28} height={23} /> },
  { lines: ["Generic"], art: <LaptopArt /> },
  { lines: ["Generic"], art: <ServerArt /> },
  { lines: ["Generic"], art: <PrinterArt /> },
  { lines: ["IP Phone"], art: <PhoneArt ip /> },
  { lines: ["VoIP", "Device"], art: <BoxArt lens dots /> },
  { lines: ["Phone"], art: <PhoneArt /> },
  { lines: ["TV"], art: <TvArt /> },
  { lines: ["Wireless", "Tablet"], art: <TabletArt /> },
  { lines: ["Smart", "Device"], art: <SmartArt /> },
  { lines: ["Generic", "Wireless"], art: <BoxArt dots /> },
  { lines: ["Generic", "Wired"], art: <BoxArt dots /> },
  { lines: ["Sniffer"], art: <SnifferArt /> },
];

const HorizontalScroll = ({ thumb }: { thumb: string }) => (
  <ScrollTrack>
    <ScrollArrow aria-label="Scroll left"><Chevron dir="left" /></ScrollArrow>
    <ScrollRail><ScrollThumb $size={thumb} /></ScrollRail>
    <ScrollArrow aria-label="Scroll right"><Chevron dir="right" /></ScrollArrow>
  </ScrollTrack>
);

const PaletteDialog = () => (
  <Dialog role="dialog" aria-labelledby="palette-title">
    <DialogHeader>
      <AppIcon />
      <DialogTitle id="palette-title">Palette Dialog</DialogTitle>
      <DialogClose aria-label="Close dialog"><Cross size={9} color="#fff" /></DialogClose>
    </DialogHeader>
    <DialogBody>
      <ShapeList>
        <ShapeButton aria-label="Freeform">
          <svg width="28" height="28" viewBox="0 0 28 28">
            <path
              d="M10 7C9 2 15 .5 19 1c5 1 8 5 6 8-2 4-5 4-5 8 0 5-1 10-5 10-5 1-12-2-14-6-1-5 4-5 7-6 3-2 2-5 2-8z"
              fill="#70c4d0"
              stroke="#4a929c"
              strokeWidth="1.500"
            />
          </svg>
        </ShapeButton>
        <ShapeButton aria-label="Ellipse">
          <svg width="32" height="26" viewBox="0 0 32 26">
            <ellipse cx="15.500" cy="13" rx="14.300" ry="11.800" fill="#ff4040" stroke="#661414" strokeWidth="1.600" />
          </svg>
        </ShapeButton>
        <ShapeButton $active aria-label="Rectangle"><RectIcon width={31} height={22} /></ShapeButton>
        <ShapeButton aria-label="Line">
          <svg width="30" height="26" viewBox="0 0 30 26">
            <path d="M5 25L28 3" stroke="#999" strokeWidth="5" />
            <path d="M3 24L26 2" stroke="#000" strokeWidth="5" />
          </svg>
        </ShapeButton>
      </ShapeList>
      <Options>
        <OptionRow>
          <Choice><Mark type="checkbox" defaultChecked />Outline</Choice>
          <Swatch />
          <ColorButton $focused>Select Outline Color</ColorButton>
        </OptionRow>
        <OptionRow>
          <div>
            <Choice><Mark type="radio" name="fill" />No Fill</Choice>
            <Choice $marked><Mark type="radio" name="fill" defaultChecked />Fill Color</Choice>
          </div>
          <Swatch />
          <ColorButton>Select Fill Color</ColorButton>
        </OptionRow>
      </Options>
    </DialogBody>
  </Dialog>
);

export default function App() {
  return (
    <>
      <GlobalStyle />
      <Page>
        <TitleBar>
          <AppIconBox><AppIcon /></AppIconBox>
          <WindowButtons>
            <WindowButton aria-label="Minimize">
              <svg width="8" height="8"><path d="M0 6h8v2H0z" fill="#222" /></svg>
            </WindowButton>
            <WindowButton aria-label="Restore">
              <svg width="10" height="10">
                <path d="M2.500 2V.5h7v7H8M.5 3h7v6.500h-7zM0 3h8" fill="none" stroke="#222" />
              </svg>
            </WindowButton>
            <WindowButton $close aria-label="Close"><Cross size={8} color="#fff" /></WindowButton>
          </WindowButtons>
        </TitleBar>

        <MenuBar>
          {menus.map((m) => <button key={m}>{m}</button>)}
        </MenuBar>

        <ToolBar>
          <ToolGroup>
            <ToolButton aria-label="New"><NewIcon /></ToolButton>
            <ToolButton aria-label="Open"><OpenIcon /></ToolButton>
            <ToolButton aria-label="Save"><SaveIcon /></ToolButton>
            <ToolButton aria-label="Print"><PrintIcon /></ToolButton>
            <ToolButton aria-label="Activity wizard"><WizardIcon /></ToolButton>
            <ToolSeparator />
            <ToolButton aria-label="Copy"><CopyIcon /></ToolButton>
            <ToolButton aria-label="Paste"><CopyIcon torn /></ToolButton>
            <ToolButton aria-label="Undo"><UndoIcon /></ToolButton>
            <ToolButton aria-label="Redo"><UndoIcon flip /></ToolButton>
            <ToolSeparator />
            <ToolButton aria-label="Zoom in"><ZoomIcon sign="+" /></ToolButton>
            <ToolButton aria-label="Zoom reset"><ZoomIcon sign="R" /></ToolButton>
            <ToolButton aria-label="Zoom out"><ZoomIcon sign="−" /></ToolButton>
          </ToolGroup>
          <ToolGroup>
            <ToolButton aria-label="Info"><InfoIcon /></ToolButton>
            <ToolButton aria-label="Help"><HelpIcon /></ToolButton>
          </ToolGroup>
        </ToolBar>

        <NavBar>
          <LogicalTab>
            <svg width="119" height="76" viewBox="0 0 119 76">
              <defs>
                <linearGradient id="logical" gradientUnits="userSpaceOnUse" x1="14" y1="0" x2="119" y2="0">
                  <stop offset="0" stopColor="#fff" />
                  <stop offset=".42" stopColor="#fbf0b8" />
                  <stop offset="1" stopColor="#f6de6c" />
                </linearGradient>
                <linearGradient id="rack">
                  <stop offset="0" stopColor="#444" />
                  <stop offset="1" stopColor="#bbb" />
                </linearGradient>
              </defs>
              <path d="M42 25.500h42.500V51c0 5-3 7.500-7 7.500H42z" fill="#c9c9c9" stroke="#77777a" />
              <path d="M53 30h21v23H53z" fill="#b4b4b4" stroke="#999" />
              <path d="M55 32h17v5H55zM55 39h17v5H55zM55 46h17v5H55z" fill="url(#rack)" />
              <path
                d="M.5 25v10c0 3 2 6.500 5 6.500h9V69c0 3 2 5.500 5 5.500h33c3 0 5-2.500 5-5.500V40c0-3-2-5.500-5-5.500H42.500V25"
                fill="url(#logical)"
                stroke="#77777a"
              />
              <path d="M0 0h119v25.500H0z" fill="url(#logical)" />
              <path d="M36 46L26 60M37 46l8 23" stroke="#666" />
              <g fill="#fff" stroke="#666">
                <ellipse cx="36.500" cy="46" rx="4" ry="3" />
                <ellipse cx="26" cy="60" rx="4" ry="3" />
                <ellipse cx="44.500" cy="69" rx="4" ry="3" />
              </g>
            </svg>
            <TabName $left={4} $top={7}>Logical</TabName>
          </LogicalTab>
          <NavButton disabled>Back</NavButton>
          <NavLabel>[Root]</NavLabel>
          <Spacer />
          <NavButton>Viewport</NavButton>
          <NavButton>Environment: 23:30:00</NavButton>
        </NavBar>

        <Main>
          <Workspace>
            <CanvasRow>
              <Canvas>
                <CanvasNote>gedung B</CanvasNote>
                {nodes.map((n) => (
                  <Node key={n.name} $x={n.x} $y={n.y}>
                    {n.art}
                    <figcaption>{n.model}<br />{n.name}</figcaption>
                  </Node>
                ))}
              </Canvas>
              <ScrollTrack $vertical>
                <ScrollArrow $vertical aria-label="Scroll up"><Chevron dir="up" /></ScrollArrow>
                <ScrollRail $vertical><ScrollThumb $size="53px" /></ScrollRail>
              </ScrollTrack>
            </CanvasRow>
            <ScrollFoot>
              <HorizontalScroll thumb="32%" />
            </ScrollFoot>
          </Workspace>
          <SideBar>
            <SideTools>
              <SideButton aria-label="Select"><SelectIcon /></SideButton>
              <SideButton aria-label="Place note"><NoteIcon /></SideButton>
              <SideButton aria-label="Delete"><DeleteIcon /></SideButton>
              <SideButton aria-label="Inspect"><InspectIcon /></SideButton>
              <SideSplit>
                <SideButton $active aria-label="Draw rectangle"><RectIcon /></SideButton>
                <SideDrop aria-label="Choose shape">
                  <svg width="8" height="5"><path d="M0 0h8L4 4.500z" fill="#111" /></svg>
                </SideDrop>
              </SideSplit>
              <SideButton aria-label="Resize shape"><ResizeIcon /></SideButton>
              <SideRule />
              <SideButton aria-label="Add simple PDU"><MailIcon /></SideButton>
              <SideButton aria-label="Add complex PDU"><MailIcon open /></SideButton>
            </SideTools>
          </SideBar>
        </Main>

        <StatusBar>
          <Clock>Time: 00:05:33</Clock>
          <StatusButton>Power Cycle Devices</StatusButton>
          <StatusButton>Fast Forward Time</StatusButton>
          <RealtimeTab>
            <svg width="117" height="75" viewBox="0 0 117 75">
              <defs>
                <linearGradient id="real" gradientUnits="userSpaceOnUse" x1="0" y1="0" x2="117" y2="0">
                  <stop offset="0" stopColor="#f6dd68" />
                  <stop offset=".6" stopColor="#fbf0b4" />
                  <stop offset="1" stopColor="#fff" />
                </linearGradient>
              </defs>
              <path d="M60.500 40V6c0-3 2-5.500 5-5.500h33c3 0 5 2.500 5 5.500v34z" fill="#c6c6c6" stroke="#555" />
              <path d="M78 2h8v4h-8zM71 8l4-2 2 3-4 2z" fill="#444" />
              <circle cx="82" cy="18" r="12" fill="#d6d6d6" stroke="#888" />
              <path d="M74 14h16v8H74z" fill="#404448" />
              <path d="M86 26.500h14v5H86zM93 26v5" fill="#ddd" stroke="#888" />
              <path
                d="M0 50h33.500V22c0-3 2-5.500 5-5.500h33c3 0 5 2.500 5 5.500v12.500H112c3 0 4.500 2 5 4V75H0z"
                fill="url(#real)"
              />
              <path
                d="M33.500 50V22c0-3 2-5.500 5-5.500h33c3 0 5 2.500 5 5.500v12.500H112c3 0 4.500 2 5 4"
                fill="none"
                stroke="#77776c"
              />
              <circle cx="55" cy="35" r="13" fill="#fff" stroke="#8a8a8a" />
              <circle cx="55" cy="35" r="10.500" fill="#dedede" stroke="#999" />
              <path d="M55.500 27v8.500H48" fill="none" stroke="#333" strokeWidth="1.500" />
            </svg>
            <TabName $left={12} $top={59}>Realtime</TabName>
          </RealtimeTab>
        </StatusBar>

        <Picker>
          <Categories>
            <CategoryRow>
              <CategoryButton aria-label="Network devices"><NetworkArt /></CategoryButton>
              <CategoryButton $active aria-label="End devices"><EndDevicesArt /></CategoryButton>
              <CategoryButton aria-label="Components"><BoardArt /></CategoryButton>
              <CategoryButton aria-label="Connections"><BoltArt /></CategoryButton>
              <CategoryButton aria-label="Miscellaneous"><FolderArt /></CategoryButton>
              <CategoryButton aria-label="Multiuser"><CloudArt /></CategoryButton>
            </CategoryRow>
            <DeviceSearch aria-label="Search devices" />
            <CategoryRow>
              <CategoryButton $active aria-label="End devices group"><EndDevicesArt /></CategoryButton>
              <CategoryButton aria-label="Home"><HouseArt /></CategoryButton>
              <CategoryButton aria-label="Smart city"><CityArt /></CategoryButton>
              <CategoryButton aria-label="Industrial"><FactoryArt /></CategoryButton>
              <CategoryButton aria-label="Power grid"><PylonArt /></CategoryButton>
            </CategoryRow>
          </Categories>
          <DevicePane>
            <DeviceList>
              {devices.map((d, i) => (
                <DeviceTile key={i}>
                  <CaptionSlot $tall={d.lines.length > 1}>{d.art}</CaptionSlot>
                  <DeviceCaption>
                    {d.lines.map((line) => <span key={line}>{line}</span>)}
                  </DeviceCaption>
                </DeviceTile>
              ))}
            </DeviceList>
            <HorizontalScroll thumb="46%" />
            <SelectedDevice>Laptop-PT</SelectedDevice>
          </DevicePane>
          <DrawerHandle aria-label="Open panel">
            <svg width="8" height="10"><path d="M8 0v10L0 5z" fill="#444" /></svg>
          </DrawerHandle>
          <AuthorMark>daily08</AuthorMark>
          <Watermark>
            <WatermarkTitle>Activate Windows</WatermarkTitle>
            <WatermarkText>Go to PC settings to activate Windows.</WatermarkText>
          </Watermark>
        </Picker>

        <ArrowMark>
          <svg width="82" height="42" viewBox="0 0 82 42">
            <path d="M1 38L70 10" stroke="#f00" strokeWidth="2.500" strokeLinecap="round" />
            <path d="M82 4L67 6l4 10z" fill="#f00" />
          </svg>
        </ArrowMark>
        <PaletteDialog />
      </Page>
    </>
  );
}
